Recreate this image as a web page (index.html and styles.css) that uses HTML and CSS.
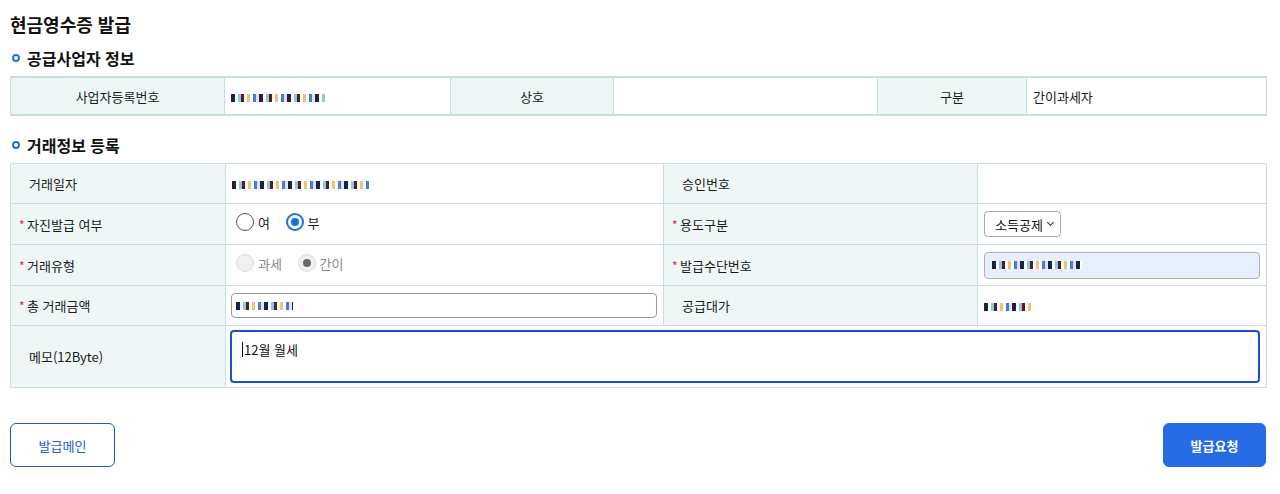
FILE: index.html
```html
<!DOCTYPE html>
<html lang="ko">

<head>
  <meta charset="UTF-8">
  <meta name="viewport" content="width=device-width, initial-scale=1.0">
  <title>현금영수증 발급</title>
  <link rel="stylesheet" href="styles.css">
</head>

<body>
  <div class="wrap">
    <h1 class="title">현금영수증 발급</h1>

    <h2 class="sec"><span class="dot"></span>공급사업자 정보</h2>
    <table class="grid info">
      <colgroup>
        <col style="width:214px"><col style="width:226px"><col style="width:163px">
        <col style="width:264px"><col style="width:149px"><col>
      </colgroup>
      <tr>
        <th>사업자등록번호</th>
        <td><span class="mask m1"></span></td>
        <th>상호</th>
        <td></td>
        <th>구분</th>
        <td>간이과세자</td>
      </tr>
    </table>

    <h2 class="sec sec2"><span class="dot"></span>거래정보 등록</h2>
    <table class="grid deal">
      <colgroup>
        <col style="width:215px"><col style="width:438px"><col style="width:314px"><col>
      </colgroup>
      <tr class="r40">
        <th>거래일자</th>
        <td><span class="mask m2"></span></td>
        <th>승인번호</th>
        <td></td>
      </tr>
      <tr>
        <th><span class="req">*</span>자진발급 여부</th>
        <td>
          <label class="opt"><span class="radio"></span>여</label>
          <label class="opt"><span class="radio on"></span>부</label>
        </td>
        <th><span class="req">*</span>용도구분</th>
        <td><span class="select">소득공제<span class="chev"></span></span></td>
      </tr>
      <tr>
        <th><span class="req">*</span>거래유형</th>
        <td>
          <label class="opt off"><span class="radio"></span>과세</label>
          <label class="opt off"><span class="radio on"></span>간이</label>
        </td>
        <th><span class="req">*</span>발급수단번호</th>
        <td><div class="field fill"><span class="mask m4"></span></div></td>
      </tr>
      <tr class="r40">
        <th><span class="req">*</span>총 거래금액</th>
        <td><div class="field amount"><span class="mask m3"></span></div></td>
        <th>공급대가</th>
        <td><span class="mask m5"></span></td>
      </tr>
      <tr class="memo-row">
        <th>메모(12Byte)</th>
        <td colspan="3"><div class="memo"><span class="caret"></span>12월 월세</div></td>
      </tr>
    </table>

    <div class="actions">
      <button class="btn line">발급메인</button>
      <button class="btn solid">발급요청</button>
    </div>
  </div>
</body>

</html>
```

FILE: styles.css
```css
* {
  margin: 0px;
  padding: 0px;
  box-sizing: border-box;
}
body {
  font-family: "Noto Sans CJK KR", "Noto Sans", sans-serif;
  font-size: 13px;
  color: #1a1a1a;
  background: #fff;
}
.wrap {
  padding: 0 13px 0 10px;
}
.title {
  margin-top: 12px;
  font-size: 18px;
  line-height: 24px;
  font-weight: 700;
  color: #111;
}
.sec {
  display: flex;
  align-items: center;
  margin: 10px 0 6px;
  font-size: 16px;
  line-height: 24px;
  font-weight: 700;
  color: #111;
}
.sec2 {
  margin-top: 17px;
}
.dot {
  width: 8px;
  height: 8px;
  border: 2px solid #2b6ad8;
  border-radius: 50%;
  margin: 0 7px 0 2px;
}

/* tables */
.grid {
  width: 100%;
  border-collapse: collapse;
  table-layout: fixed;
}
.grid th,
.grid td {
  border: 1px solid #c8dfe1;
  font-weight: 400;
  vertical-align: middle;
}
.grid th {
  background: #eef7f6;
  color: #1a1a1a;
}
.grid td {
  padding: 0 6px;
}
.info tr {
  height: 38px;
}
.info {
  border-top: 2px solid #c8dfe1;
  border-bottom: 2px solid #c8dfe1;
}
.deal th {
  text-align: left;
  padding-left: 18px;
}
.deal tr {
  height: 41px;
}
.deal tr.r40 {
  height: 40px;
}
.deal tr.memo-row {
  height: 62px;
}
.req {
  display: inline-block;
  width: 8px;
  margin-left: -10px;
  color: #d6245a;
  font-size: 12px;
}
.memo-row td {
  padding: 0 6px 0 4px;
}

/* masked values */
.mask {
  display: inline-block;
  height: 8px;
  vertical-align: middle;
  background: repeating-linear-gradient(90deg, #1a2440 0 4px, #fff 4px 7px, #8dc6f0 7px 10px, #5a1e10 10px 13px, #fff 13px 16px, #f1c27d 16px 19px, #fff 19px 22px, #3f7fd6 22px 25px, #e8e0f0 25px 28px);
}
.m1 { width: 94px; }
.m2 { width: 137px; }
.m3 { width: 57px; margin-left: 4px; }
.m4 { width: 90px; margin-left: 7px; }
.m5 { width: 48px; }

/* radios */
.opt {
  display: inline-flex;
  align-items: center;
  margin: 0 8px 0 4px;
  color: #1a1a1a;
}
.radio {
  width: 18px;
  height: 18px;
  margin-right: 4px;
  border: 1px solid #555;
  border-radius: 50%;
  position: relative;
  background: #fff;
}
.radio.on {
  border: 2px solid #1a6fe0;
}
.radio.on::after {
  content: "";
  position: absolute;
  left: 3px;
  top: 3px;
  width: 8px;
  height: 8px;
  border-radius: 50%;
  background: #1a6fe0;
}
.opt.off {
  color: #8a8a8a;
}
.opt.off .radio {
  border: 1px solid #dcdcdc;
  background: #f0f0f0;
}
.opt.off .radio.on::after {
  left: 4px;
  top: 4px;
  background: #6a6a6a;
}

/* inputs */
.select {
  display: inline-flex;
  align-items: center;
  height: 26px;
  padding: 0 7px 0 10px;
  border: 1px solid #a9a9a9;
  border-radius: 4px;
  color: #111;
}
.chev {
  width: 5px;
  height: 5px;
  margin: -3px 0 0 5px;
  border-right: 1px solid #333;
  border-bottom: 1px solid #333;
  transform: rotate(45deg);
}
.field {
  display: flex;
  align-items: center;
  height: 26px;
  border: 1px solid #b0b0b0;
  border-radius: 4px;
}
.field.fill {
  height: 27px;
  background: #e8effc;
}
.field.amount {
  height: 25px;
  margin-left: -1px;
  border-color: #999;
}
.memo {
  height: 53px;
  padding: 8px 10px;
  border: 2px solid #1d4fcc;
  border-radius: 4px;
  color: #111;
  font-size: 13px;
  line-height: 20px;
}
.caret {
  display: inline-block;
  width: 1px;
  height: 15px;
  margin-right: 1px;
  vertical-align: -2px;
  background: #111;
}

/* buttons */
.actions {
  display: flex;
  justify-content: space-between;
  margin-top: 35px;
  padding-right: 1px;
}
.btn {
  height: 44px;
  border-radius: 6px;
  font-family: inherit;
  font-size: 13px;
  cursor: pointer;
}
.btn.line {
  width: 105px;
  background: #fff;
  border: 1px solid #1f58d0;
  color: #2360d6;
}
.btn.solid {
  width: 103px;
  background: #246be4;
  border: 1px solid #246be4;
  color: #fff;
  font-weight: 700;
}
```
